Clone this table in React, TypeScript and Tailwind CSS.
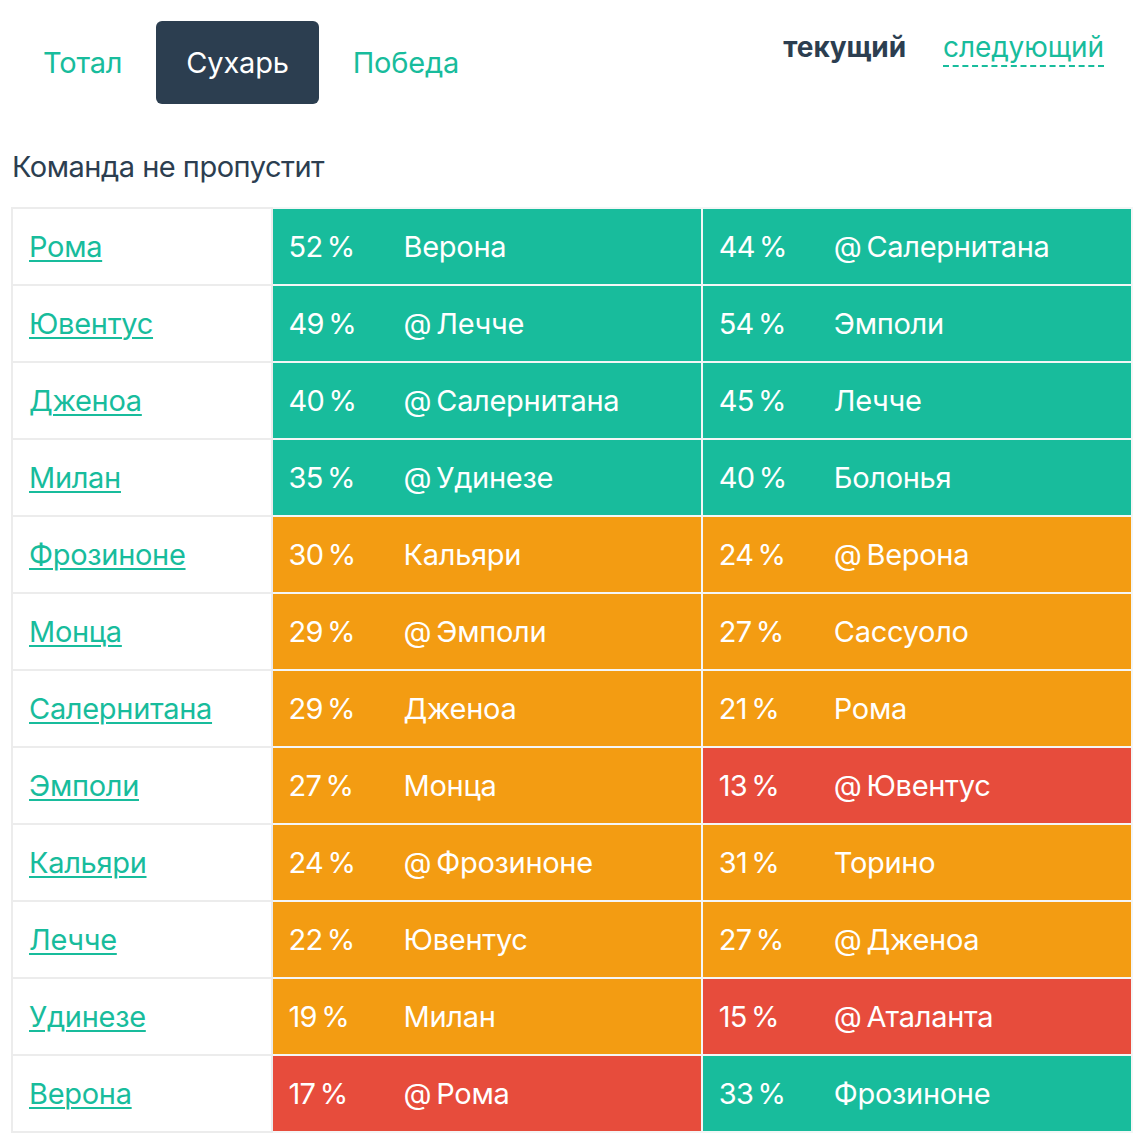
import { useState } from 'react';

type Cell = { pct: number; opp: string };
type Row = { team: string; cur: Cell; next: Cell };

const rows: Row[] = [
  { team: 'Рома', cur: { pct: 52, opp: 'Верона' }, next: { pct: 44, opp: '@ Салернитана' } },
  { team: 'Ювентус', cur: { pct: 49, opp: '@ Лечче' }, next: { pct: 54, opp: 'Эмполи' } },
  { team: 'Дженоа', cur: { pct: 40, opp: '@ Салернитана' }, next: { pct: 45, opp: 'Лечче' } },
  { team: 'Милан', cur: { pct: 35, opp: '@ Удинезе' }, next: { pct: 40, opp: 'Болонья' } },
  { team: 'Фрозиноне', cur: { pct: 30, opp: 'Кальяри' }, next: { pct: 24, opp: '@ Верона' } },
  { team: 'Монца', cur: { pct: 29, opp: '@ Эмполи' }, next: { pct: 27, opp: 'Сассуоло' } },
  { team: 'Салернитана', cur: { pct: 29, opp: 'Дженоа' }, next: { pct: 21, opp: 'Рома' } },
  { team: 'Эмполи', cur: { pct: 27, opp: 'Монца' }, next: { pct: 13, opp: '@ Ювентус' } },
  { team: 'Кальяри', cur: { pct: 24, opp: '@ Фрозиноне' }, next: { pct: 31, opp: 'Торино' } },
  { team: 'Лечче', cur: { pct: 22, opp: 'Ювентус' }, next: { pct: 27, opp: '@ Дженоа' } },
  { team: 'Удинезе', cur: { pct: 19, opp: 'Милан' }, next: { pct: 15, opp: '@ Аталанта' } },
  { team: 'Верона', cur: { pct: 17, opp: '@ Рома' }, next: { pct: 33, opp: 'Фрозиноне' } },
];

const tone = (pct: number) => {
  if (pct >= 33) return 'bg-[#18bc9c]';
  if (pct >= 18) return 'bg-[#f39c12]';
  return 'bg-[#e74c3c]';
};

const tabs = ['Тотал', 'Сухарь', 'Победа'];

function PctCell({ cell }: { cell: Cell }) {
  return (
    <td className={`${tone(cell.pct)} border-2 border-[#f4f6f6] p-0 text-white`}>
      <div className="flex items-center pl-4">
        <span className="w-[115px] shrink-0 tracking-[-0.8px]">{cell.pct}&thinsp;%</span>
        <span>{cell.opp.replace('@ ', '@\u2009')}</span>
      </div>
    </td>
  );
}

export default function App() {
  const [tab, setTab] = useState('Сухарь');

  return (
    <div className="min-h-[1146px] bg-white px-[11px] font-['Inter','Noto_Sans',sans-serif] text-[#2c3e50]">
      {/* Tabs + week switch */}
      <div className="flex items-start justify-between pt-[21px]">
        <div className="ml-[2px] flex gap-1">
          {tabs.map((t) => (
            <button
              key={t}
              onClick={() => setTab(t)}
              className={`h-[83px] rounded-md px-[30px] text-[29px] tracking-[-0.2px] ${
                tab === t ? 'bg-[#2c3e50] text-white' : 'text-[#18bc9c]'
              }`}
            >
              {t}
            </button>
          ))}
        </div>
        <div className="mr-[29px] flex gap-[37px] pt-[9px] text-[28px] tracking-[-0.1px]">
          <span className="font-bold leading-[34px]">текущий</span>
          <span className="border-b-2 border-dashed border-[#18bc9c] leading-[35px] text-[#18bc9c]">
            следующий
          </span>
        </div>
      </div>

      <h2 className="mt-[46px] mb-[23px] pl-px text-[29px] leading-[34px] tracking-[-0.5px]">
        Команда не пропустит
      </h2>

      <table className="w-[1122px] border-collapse border-2 border-[#ececec] text-[29px] tracking-[-0.3px]">
        <colgroup>
          <col className="w-[260px]" />
          <col className="w-[431px]" />
          <col className="w-[431px]" />
        </colgroup>
        <tbody>
          {rows.map((r) => (
            <tr key={r.team} className="h-[77px]">
              <td className="border-2 border-[#ececec] pl-4">
                <a
                  href="#"
                  className="text-[#18bc9c] underline decoration-2 underline-offset-[3px]"
                >
                  {r.team}
                </a>
              </td>
              <PctCell cell={r.cur} />
              <PctCell cell={r.next} />
            </tr>
          ))}
        </tbody>
      </table>
    </div>
  );
}
